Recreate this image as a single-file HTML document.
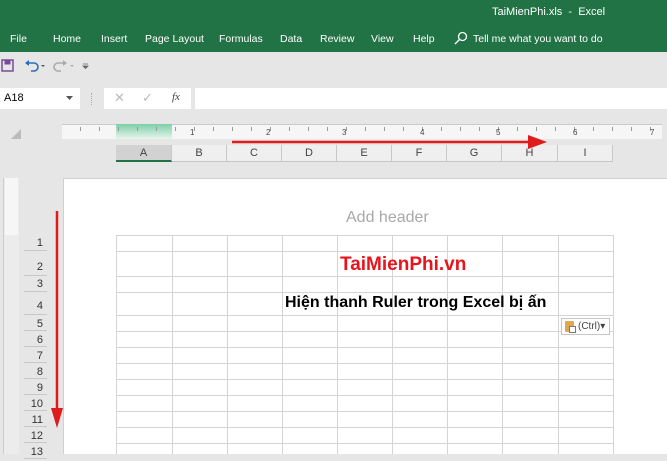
<!DOCTYPE html>
<html><head><meta charset="utf-8"><style>
*{margin:0;padding:0;box-sizing:border-box}
body{width:667px;height:454px;overflow:hidden;background:#e6e6e6;font-family:"Liberation Sans",sans-serif;position:relative}
.a{position:absolute}
.menu span{position:absolute;top:33px;color:#fff;font-size:10.5px}
.col{position:absolute;top:145px;height:17px;border-right:1px solid #c8c8c8;font-size:11px;color:#444;text-align:center;line-height:17px;background:#efefef;border-bottom:1px solid #c6c6c6}
.rh{position:absolute;left:24px;width:23px;text-align:right;padding-right:4px;font-size:11px;color:#333;border-bottom:1px solid #c8c8c8;background:#e6e6e6}
.hl{position:absolute;left:116px;width:497px;height:1px;background:#d4d4d4}
.vl{position:absolute;top:235px;width:1px;height:219px;background:#d4d4d4}
.rt{position:absolute;top:128px;font-size:8px;color:#444}
</style></head><body>
<div class="a" style="left:0;top:0;width:667px;height:52px;background:#217346"></div>
<div class="a" style="left:492px;top:6px;color:#fff;font-size:11px">TaiMienPhi.xls &nbsp;-&nbsp; Excel</div>
<div class="menu">
<span style="left:10px">File</span><span style="left:53px">Home</span><span style="left:101px">Insert</span><span style="left:145px">Page Layout</span><span style="left:219px">Formulas</span><span style="left:280px">Data</span><span style="left:320px">Review</span><span style="left:371px">View</span><span style="left:413px">Help</span><span style="left:473px">Tell me what you want to do</span>
</div>
<svg class="a" style="left:454px;top:31px" width="14" height="14"><circle cx="8.5" cy="5.5" r="4" fill="none" stroke="#fff" stroke-width="1.3"/><line x1="5.5" y1="8.5" x2="1" y2="13" stroke="#fff" stroke-width="1.4"/></svg>
<div class="a" style="left:0;top:52px;width:667px;height:34px;background:#e6e6e6"></div>
<svg class="a" style="left:1px;top:59px" width="100" height="14"><rect x="1" y="1" width="11" height="11" fill="none" stroke="#7a4a9a" stroke-width="1.5"/><rect x="3.5" y="1.5" width="6" height="4" fill="#7a4a9a"/><path d="M27 4 L33 4 A4 4 0 0 1 33 12 L30 12" fill="none" stroke="#2a6ebb" stroke-width="1.6"/><path d="M24 4 L28 1 L28 7Z" fill="#2a6ebb"/><path d="M40 6 l2 2 l2-2z" fill="#555"/><path d="M63 4 L57 4 A4 4 0 0 0 57 12 L60 12" fill="none" stroke="#aaa" stroke-width="1.6"/><path d="M66 4 L62 1 L62 7Z" fill="#aaa"/><path d="M69 6 l2 2 l2-2z" fill="#aaa"/><path d="M82 5 h5 M82 7 l2.5 2.5 l2.5-2.5z" stroke="#666" fill="#666" stroke-width="0.8"/></svg>
<div class="a" style="left:0;top:88px;width:80px;height:21px;background:#fff;font-size:11px;padding:4px 4px">A18</div>
<svg class="a" style="left:66px;top:95px" width="8" height="6"><path d="M0 1h7l-3.5 4z" fill="#555"/></svg>
<div class="a" style="left:91px;top:93px;width:2px;height:12px;border-left:1px dotted #aaa"></div>
<div class="a" style="left:104px;top:88px;width:87px;height:21px;background:#fff"></div>
<div class="a" style="left:114px;top:90px;font-size:13px;color:#bbb">✕</div>
<div class="a" style="left:142px;top:90px;font-size:13px;color:#bbb">✓</div>
<div class="a" style="left:172px;top:91px;font-size:11px;font-style:italic;font-family:'Liberation Serif',serif;color:#444">fx</div>
<div class="a" style="left:195px;top:88px;width:472px;height:21px;background:#fff"></div>
<svg class="a" style="left:10px;top:128px" width="12" height="12"><path d="M11 1 L11 11 L1 11Z" fill="#bbb"/></svg>
<div class="a" style="left:62px;top:124px;width:600px;height:15px;background:#f6f6f6;border-top:1px solid #ccc"></div>
<div class="a" style="left:116px;top:124px;width:56px;height:15px;background:linear-gradient(#7fcfa8,#e8f5ee)"></div>
<div class="a" style="left:62px;top:124px;width:600px;height:15px;background:repeating-linear-gradient(90deg,transparent 0,transparent 18px,#999 18px,#999 19px) 0 3px/100% 4px no-repeat"></div>
<span class="rt" style="left:190px">1</span><span class="rt" style="left:266px">2</span><span class="rt" style="left:342px">3</span><span class="rt" style="left:420px">4</span><span class="rt" style="left:496px">5</span><span class="rt" style="left:573px">6</span><span class="rt" style="left:650px">7</span>
<div class="col" style="left:116px;width:56px;background:#d2d2d2;border-bottom:2px solid #217346">A</div>
<div class="col" style="left:172px;width:55px">B</div>
<div class="col" style="left:227px;width:55px">C</div>
<div class="col" style="left:282px;width:55px">D</div>
<div class="col" style="left:337px;width:55px">E</div>
<div class="col" style="left:392px;width:55px">F</div>
<div class="col" style="left:447px;width:55px">G</div>
<div class="col" style="left:502px;width:56px">H</div>
<div class="col" style="left:558px;width:55px">I</div>
<div class="a" style="left:3px;top:178px;width:16px;height:276px;background:#ececec;border-left:1px solid #ccc"></div>
<div class="a" style="left:5px;top:178px;width:13px;height:57px;background:#f6f6f6"></div>
<div class="a" style="left:63px;top:178px;width:604px;height:276px;background:#fff;border-top:1px solid #d0d0d0;border-left:1px solid #d0d0d0"></div>
<div class="a" style="left:346px;top:209px;font-size:16px;color:#a8a8a8">Add header</div>
<div class="hl" style="top:235px"></div><div class="hl" style="top:251px"></div><div class="hl" style="top:276px"></div><div class="hl" style="top:292px"></div><div class="hl" style="top:315px"></div><div class="hl" style="top:331px"></div><div class="hl" style="top:347px"></div><div class="hl" style="top:363px"></div><div class="hl" style="top:379px"></div><div class="hl" style="top:395px"></div><div class="hl" style="top:411px"></div><div class="hl" style="top:427px"></div><div class="hl" style="top:443px"></div>
<div class="vl" style="left:116px"></div><div class="vl" style="left:172px"></div><div class="vl" style="left:227px"></div><div class="vl" style="left:282px"></div><div class="vl" style="left:337px"></div><div class="vl" style="left:392px"></div><div class="vl" style="left:447px"></div><div class="vl" style="left:502px"></div><div class="vl" style="left:558px"></div><div class="vl" style="left:613px"></div>
<div class="rh" style="top:235px;height:16px;line-height:16px">1</div>
<div class="rh" style="top:251px;height:25px;line-height:32px">2</div>
<div class="rh" style="top:276px;height:16px;line-height:16px">3</div>
<div class="rh" style="top:292px;height:23px;line-height:28px">4</div>
<div class="rh" style="top:315px;height:16px;line-height:18px">5</div>
<div class="rh" style="top:331px;height:16px;line-height:18px">6</div>
<div class="rh" style="top:347px;height:16px;line-height:18px">7</div>
<div class="rh" style="top:363px;height:16px;line-height:18px">8</div>
<div class="rh" style="top:379px;height:16px;line-height:18px">9</div>
<div class="rh" style="top:395px;height:16px;line-height:18px">10</div>
<div class="rh" style="top:411px;height:16px;line-height:18px">11</div>
<div class="rh" style="top:427px;height:16px;line-height:18px">12</div>
<div class="rh" style="top:443px;height:16px;line-height:18px">13</div>
<div class="a" style="left:340px;top:254px;font-size:19px;font-weight:bold;color:#e8141b">TaiMienPhi.vn</div>
<div class="a" style="left:285px;top:294px;font-size:16px;font-weight:bold;color:#000;font-family:'Liberation Sans',sans-serif">Hiện thanh Ruler trong Excel bị ấn</div>
<div class="a" style="left:561px;top:318px;width:49px;height:17px;background:#fff;border:1px solid #c6c6c6;font-size:10px;color:#444;line-height:15px;padding-left:16px">(Ctrl)▾</div>
<div class="a" style="left:565px;top:321px;width:9px;height:11px;background:#e0a850;border-radius:1px"></div>
<div class="a" style="left:569px;top:326px;width:7px;height:7px;background:#fff;border:1px solid #777"></div>
<svg class="a" style="left:0;top:0" width="667" height="454">
<line x1="232" y1="142" x2="530" y2="142" stroke="#e01b1b" stroke-width="2.5"/>
<path d="M528 135 L547 142 L528 149Z" fill="#e01b1b"/>
<line x1="57" y1="211" x2="57" y2="410" stroke="#e01b1b" stroke-width="2.5"/>
<path d="M51 408 L57 428 L63 408Z" fill="#e01b1b"/>
</svg>
</body></html>
